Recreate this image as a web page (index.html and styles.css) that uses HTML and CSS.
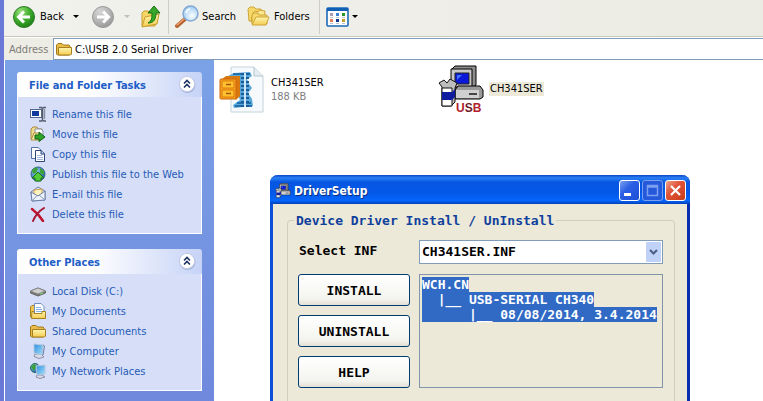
FILE: index.html
```html
<!DOCTYPE html>
<html lang="en">
<head>
  <meta charset="UTF-8" />
  <meta name="viewport" content="width=device-width, initial-scale=1.0"/>
  <title>C:\USB 2.0 Serial Driver</title>
  <link rel="stylesheet" href="styles.css">
</head>
<body>

  <svg class="defs" width="0" height="0" aria-hidden="true">
    <defs>
      <radialGradient id="green" cx="35%" cy="25%" r="80%">
        <stop offset="0" stop-color="#9be07f"/><stop offset="0.5" stop-color="#43b02f"/><stop offset="1" stop-color="#1b7d16"/>
      </radialGradient>
      <radialGradient id="grey" cx="35%" cy="25%" r="80%">
        <stop offset="0" stop-color="#d6d6d6"/><stop offset="0.6" stop-color="#b4b4b4"/><stop offset="1" stop-color="#969696"/>
      </radialGradient>
      <radialGradient id="lens" cx="60%" cy="65%" r="65%">
        <stop offset="0" stop-color="#fbfeff"/><stop offset="1" stop-color="#9fcdf3"/>
      </radialGradient>
      <radialGradient id="globe" cx="35%" cy="30%" r="75%">
        <stop offset="0" stop-color="#9ad0f4"/><stop offset="1" stop-color="#1c5bab"/>
      </radialGradient>
      <linearGradient id="folder" x1="0" y1="0" x2="0" y2="1">
        <stop offset="0" stop-color="#fff6b0"/><stop offset="1" stop-color="#f3cc50"/>
      </linearGradient>
      <linearGradient id="screen" x1="0" y1="0" x2="1" y2="1">
        <stop offset="0" stop-color="#2f8de0"/><stop offset="1" stop-color="#a5e2fb"/>
      </linearGradient>
      <symbol id="chevrons" viewBox="0 0 18 18">
        <circle cx="9.500" cy="10" r="8" fill="#8f9fc9" opacity="0.6"/>
        <circle cx="9" cy="9" r="7.600" fill="#fff" stroke="#c3cbe6"/>
        <path d="M6 8.500 L9 5.500 L12 8.500 M6 12.500 L9 9.500 L12 12.500" fill="none" stroke="#1c3163" stroke-width="1.600"/>
      </symbol>
      <symbol id="smallfolder" viewBox="0 0 16 16">
        <path d="M0.500 13 V4 L2 2.500 H6 L7.500 4 H13 L14 5 V13 L13 14 H1.500 Z" fill="#e9bd45" stroke="#a27a1d"/>
        <path d="M2.500 14 V6.500 H15.500 V13 L14.500 14 Z" fill="url(#folder)" stroke="#a8801f"/>
      </symbol>
      <symbol id="usbpc" viewBox="0 0 46 46">
        <path d="M14 4 L17 1 H38 V20 L34 23 H14 Z" fill="#8d8d8d" stroke="#000"/>
        <path d="M13 4 H34 V22 H13 Z" fill="#c8c8c8" stroke="#000"/>
        <path d="M17 8 H31 V19 H17 Z" fill="#0b18d8" stroke="#222"/>
        <path d="M19 10 H24 L19 15 Z" fill="#3e72ff"/>
        <path d="M17 25 L20 21 H42 L45 25 V32 L42 34 H17 Z" fill="#9a9a9a" stroke="#000"/>
        <path d="M18 25 H41 V33 H18 Z" fill="#d0d0d0"/>
        <path d="M31 29 H39" stroke="#444" stroke-width="2"/>
        <path d="M4 22 L1 18 L6 15 L9 18 L12 14 L19 18 L17 23 L17 37 L13 41 H4 Z" fill="#bdbdbd" stroke="#111"/>
        <path d="M4 23 H14 V41 H4 Z" fill="#fff" stroke="#111"/>
        <path d="M4 27 H14 V35 H4 Z M14 27 L17 24 V32 L14 35 Z" fill="#101c9e"/>
      </symbol>
    </defs>
  </svg>

  <div class="explorer">
    <div class="toolbar">
      <button class="tool back" type="button">
        <svg width="24" height="24" viewBox="0 0 24 24" aria-hidden="true">
          <circle cx="12" cy="12" r="10.500" fill="url(#green)" stroke="#2b7d22"/>
          <path d="M18 12 H7 M12 6.500 L6.500 12 L12 17.500" fill="none" stroke="#fff" stroke-width="3"/>
        </svg>
        <span>Back</span>
      </button>
      <button class="caret" type="button" aria-label="Back history"></button>
      <button class="tool forward" type="button" aria-label="Forward" disabled>
        <svg width="24" height="24" viewBox="0 0 24 24" aria-hidden="true">
          <circle cx="12" cy="12" r="10.500" fill="url(#grey)" stroke="#9a9a9a"/>
          <path d="M6 12 H17 M12 6.500 L17.500 12 L12 17.500" fill="none" stroke="#fff" stroke-width="3"/>
        </svg>
      </button>
      <button class="caret off" type="button" aria-label="Forward history" disabled></button>
      <button class="tool up" type="button" aria-label="Up">
        <svg width="22" height="24" viewBox="0 0 22 24" aria-hidden="true">
          <path d="M2 21 V8 L4 6 H8 L10 8 H15 V21 Z" fill="#f6d768" stroke="#c79c2b"/>
          <path d="M2 22 L5 12 L19 9 L17 19 Z" fill="url(#folder)" stroke="#c79c2b"/>
          <path d="M8 18 C12 16 12 12 12 8 H8 L14 1 L20 8 H16 C16 14 14 18 8 18 Z" fill="#35a72b" stroke="#14700f"/>
        </svg>
      </button>
      <span class="divider"></span>
      <button class="tool search" type="button">
        <svg width="24" height="24" viewBox="0 0 24 24" aria-hidden="true">
          <path d="M2 21 L10 14" stroke="#b3612f" stroke-width="4" stroke-linecap="round"/>
          <path d="M2 20 L9 14" stroke="#eea26c" stroke-width="1.500" stroke-linecap="round"/>
          <circle cx="15.500" cy="8.500" r="7.500" fill="url(#lens)" stroke="#84a8d6" stroke-width="1.500"/>
          <path d="M11 8 A5 5 0 0 1 15 4" fill="none" stroke="#fff" stroke-width="1.500"/>
        </svg>
        <span>Search</span>
      </button>
      <button class="tool folders" type="button">
        <svg width="24" height="24" viewBox="0 0 24 24" aria-hidden="true">
          <path d="M2 16 L1 4 L3 2 H7 L9 4 H14 L15 16 Z" fill="#f5d868" stroke="#cfa43a"/>
          <path d="M4 17 L6 8 L8 6 L11 7 L12 5 L18 6 L17 16 Z" fill="#fbe98f" stroke="#cfa43a"/>
          <path d="M5 19 V10 L7 8 H11 L12 10 H20 V19 Z" fill="#f5d868" stroke="#cfa43a"/>
          <path d="M5 20 L9 12 H22 L19 20 Z" fill="url(#folder)" stroke="#cfa43a"/>
        </svg>
        <span>Folders</span>
      </button>
      <span class="divider"></span>
      <button class="tool views" type="button" aria-label="Views">
        <svg width="24" height="20" viewBox="0 0 24 20" aria-hidden="true">
          <rect x="1" y="1" width="21" height="18" rx="1" fill="#fff" stroke="#1d6ab8" stroke-width="1.600"/>
          <path d="M1 1 H22 V4 H1 Z" fill="#1260b5"/>
          <path d="M4 6 H7 V9 H4 Z" fill="#a99bb5"/><path d="M10 6 H13 V9 H10 Z" fill="#3b82d0"/><path d="M16 6 H19 V9 H16 Z" fill="#2b952c"/>
          <path d="M4 12 H7 V15 H4 Z" fill="#e08157"/><path d="M10 12 H13 V15 H10 Z" fill="#12358e"/><path d="M16 12 H19 V15 H16 Z" fill="#c5a129"/>
          <path d="M4 10.500 H7 M10 10.500 H13 M16 10.500 H19 M4 16.500 H7 M10 16.500 H13 M16 16.500 H19" stroke="#b9c3cf"/>
        </svg>
      </button>
      <button class="caret" type="button" aria-label="Views menu"></button>
    </div>

    <div class="addressbar">
      <label for="address">Address</label>
      <div class="address">
        <svg width="16" height="16" aria-hidden="true"><use href="#smallfolder"/></svg>
        <input type="text" id="address" value="C:\USB 2.0 Serial Driver" />
      </div>
    </div>

    <div class="content">
      <aside class="sidebar">
        <section class="panel">
          <header>
            <h2>File and Folder Tasks</h2>
            <button type="button" aria-label="Collapse File and Folder Tasks"><svg width="18" height="18" aria-hidden="true"><use href="#chevrons"/></svg></button>
          </header>
          <ul>
            <li><a href="#">
              <svg width="16" height="16" viewBox="0 0 16 16" aria-hidden="true">
                <rect x="0.500" y="3.500" width="11" height="8" fill="#fff" stroke="#52668f"/>
                <rect x="2" y="5" width="7" height="5" fill="#103a9d"/>
                <path d="M9 1.500 H11.500 L12.500 2.500 L13.500 1.500 H16 M12.500 2 V14 M9 15 H11.500 L12.500 14 L13.500 15 H16" fill="none" stroke="#555e70" stroke-width="1.500"/>
                <path d="M14.500 3 V13" stroke="#8a92a3" stroke-width="1.500"/>
              </svg>Rename this file</a></li>
            <li><a href="#">
              <svg width="16" height="16" viewBox="0 0 16 16" aria-hidden="true">
                <path d="M1 13 V3 L3 1 H7 L8 3 H12 V13 Z" fill="#f1d98a" stroke="#a88d45"/>
                <path d="M5 3 H11 L13 5 V12 H5 Z" fill="#fff" stroke="#8790a5"/>
                <path d="M1 14 L4 7 H10 V14 Z" fill="#fbe9a5" stroke="#a88d45"/>
                <path d="M5 9 H9 V6 L15 11 L9 15.500 V13 H5 Z" fill="#2ea42a" stroke="#11650f"/>
              </svg>Move this file</a></li>
            <li><a href="#">
              <svg width="16" height="16" viewBox="0 0 16 16" aria-hidden="true">
                <path d="M1.500 1.500 H8 L11 4 V12.500 H1.500 Z" fill="#fff" stroke="#5574a5"/>
                <path d="M5.500 4.500 H11 L14.500 7.500 V15.500 H5.500 Z" fill="#fff" stroke="#2c477b"/>
                <path d="M11 4.500 V8 H14.500" fill="#b8cbeb" stroke="#2c477b"/>
                <path d="M7 9.500 H12 M7 11.500 H13 M7 13.500 H13" stroke="#a3b7d8"/>
              </svg>Copy this file</a></li>
            <li><a href="#">
              <svg width="16" height="16" viewBox="0 0 16 16" aria-hidden="true">
                <circle cx="8" cy="8" r="7" fill="url(#globe)" stroke="#35618c"/>
                <path d="M2 4 L6 1 L8 3 L6 7 L3 8 Z M10 2 L14 5 L14 9 L10 7 Z" fill="#3da238"/>
                <path d="M8 6 L14 12 H11 V15 H5 V12 H2 Z" fill="#52cb37" stroke="#176f14"/>
              </svg>Publish this file to the Web</a></li>
            <li><a href="#">
              <svg width="16" height="16" viewBox="0 0 16 16" aria-hidden="true">
                <path d="M1 6 L8 1 L15 5 V14 L2 15 Z" fill="#dce5f6" stroke="#6d7fa5"/>
                <path d="M4 4 L12 3 V10 H4 Z" fill="#fff3c0" stroke="#d79c45"/>
                <path d="M1 6 L8 10 L15 5 V14 L2 15 Z" fill="#edf3fd" stroke="#6d7fa5"/>
                <path d="M2 15 L7 9.500 M15 14 L9 9" stroke="#8799bb"/>
              </svg>E-mail this file</a></li>
            <li><a href="#">
              <svg width="16" height="16" viewBox="0 0 16 16" aria-hidden="true">
                <path d="M2 3 C6 6 10 10 13 15" fill="none" stroke="#c0152f" stroke-width="2.500" stroke-linecap="round"/>
                <path d="M14 2 C9 5 5 10 3 15" fill="none" stroke="#a81832" stroke-width="2" stroke-linecap="round"/>
              </svg>Delete this file</a></li>
          </ul>
        </section>

        <section class="panel">
          <header>
            <h2>Other Places</h2>
            <button type="button" aria-label="Collapse Other Places"><svg width="18" height="18" aria-hidden="true"><use href="#chevrons"/></svg></button>
          </header>
          <ul>
            <li><a href="#">
              <svg width="16" height="16" viewBox="0 0 16 16" aria-hidden="true">
                <path d="M0.500 8 L8 5 L15.500 8 V10 L8 13 L0.500 10 Z" fill="#777" stroke="#666"/>
                <path d="M0.500 8 L8 5 L15.500 8 L8 11 Z" fill="#cfcfcf" stroke="#8a8a8a"/>
                <path d="M10 11 L13 10" stroke="#7be06e"/>
              </svg>Local Disk (C:)</a></li>
            <li><a href="#">
              <svg width="16" height="16" viewBox="0 0 16 16" aria-hidden="true">
                <path d="M0.500 14 V4 L2 2.500 H5 V14 Z" fill="#f0c850" stroke="#a8801f"/>
                <path d="M4.500 0.500 H11 L14 3.500 V13 H4.500 Z" fill="#fff" stroke="#6c8fc0"/>
                <path d="M6 4.500 H11 M6 6.500 H12 M6 8.500 H12" stroke="#87b3e4"/>
                <path d="M2 8.500 H4 V10.500 H12 V8.500 H15.500 V15.500 H1.500 Z" fill="url(#folder)" stroke="#a8801f"/>
              </svg>My Documents</a></li>
            <li><a href="#"><svg width="16" height="16" aria-hidden="true"><use href="#smallfolder"/></svg>Shared Documents</a></li>
            <li><a href="#">
              <svg width="16" height="16" viewBox="0 0 16 16" aria-hidden="true">
                <path d="M5 11 H11 L14 14 L9 15.500 L4 13.500 Z" fill="#d9dbe8" stroke="#8b90a9"/>
                <path d="M4 1 L13 2 L12 12 L4 10 Z" fill="url(#screen)" stroke="#b5c6dd"/>
                <path d="M13 2 L14.500 3 L13 12" fill="none" stroke="#637ba5"/>
              </svg>My Computer</a></li>
            <li><a href="#">
              <svg width="16" height="16" viewBox="0 0 16 16" aria-hidden="true">
                <circle cx="5" cy="5" r="4.500" fill="url(#globe)" stroke="#286b56"/>
                <path d="M1 4 L4 1 L7 3 L4 8 Z" fill="#35a038"/>
                <path d="M7 12 H12 L15 14 L10 15.500 L6 14 Z" fill="#d9dbe8" stroke="#8b90a9"/>
                <path d="M6 3 L15 2 V11 L7 12 Z" fill="url(#screen)" stroke="#b5c6dd"/>
              </svg>My Network Places</a></li>
          </ul>
        </section>
      </aside>

      <main class="files">
        <div class="file">
          <svg width="48" height="48" viewBox="0 0 48 48" aria-hidden="true">
            <path d="M13 2 H36 L45 11 V47 H13 Z" fill="#f6fafc" stroke="#c6d3da"/>
            <path d="M36 2 V11 H45" fill="#e4edf1" stroke="#b5c6cf"/>
            <path d="M10 11 L16 8 L32 7 L34 11 L29 14 L31 19 L34 23 L30 28 L34 34 L35 41 L16 43 L15 40 L22 35 L20 30 L12 30 Z" fill="#58a8da"/>
            <path d="M17 41 H34 M19 38 H33 M15 9 H32" stroke="#2370ae" stroke-width="2"/>
            <path d="M27 8 V42" stroke="#1d5b98" stroke-width="8" stroke-dasharray="2 2"/>
            <path d="M27 8 V42" stroke="#cde8f6" stroke-width="2"/>
            <path d="M3 15 L8 11 H22 V31 L18 35 Z" fill="#d8780e"/>
            <rect x="2" y="14" width="16" height="20" rx="1" fill="#f7a51e" stroke="#cc650c"/>
            <path d="M4 16 H16 V23 H4 Z M4 25 H16 V32 H4 Z" fill="#ffc02f" stroke="#dc7b0e"/>
            <path d="M8 19.500 H13 M8 28.500 H13" stroke="#a7530a" stroke-width="1.600"/>
          </svg>
          <div class="info">
            <span class="name">CH341SER</span>
            <span class="size">188 KB</span>
          </div>
        </div>
        <div class="file">
          <div class="usbicon">
            <svg width="46" height="46" aria-hidden="true"><use href="#usbpc"/></svg>
            <span><b>U</b><i>S</i><b>B</b></span>
          </div>
          <div class="info">
            <span class="name selected">CH341SER</span>
          </div>
        </div>
      </main>
    </div>

    <!-- setup window on top of the folder -->
    <div class="dialog" role="dialog" aria-labelledby="dialogTitle">
      <div class="titlebar">
        <svg width="16" height="16" viewBox="0 0 46 46" aria-hidden="true"><use href="#usbpc"/></svg>
        <h1 id="dialogTitle">DriverSetup</h1>
        <button class="winbtn" type="button" aria-label="Minimize">
          <svg width="19" height="19" viewBox="0 0 19 19" aria-hidden="true"><path d="M4 13.500 H11" stroke="#fff" stroke-width="3"/></svg>
        </button>
        <button class="winbtn max" type="button" aria-label="Maximize" disabled>
          <svg width="19" height="19" viewBox="0 0 19 19" aria-hidden="true"><path d="M4.500 4.500 H14.500 V14.500 H4.500 Z M4 6 H15" fill="none" stroke="#7d9ff0" stroke-width="1.500"/></svg>
        </button>
        <button class="winbtn close" type="button" aria-label="Close">
          <svg width="19" height="19" viewBox="0 0 19 19" aria-hidden="true"><path d="M5 5 L14 14 M14 5 L5 14" stroke="#fff" stroke-width="2.200"/></svg>
        </button>
      </div>
      <form class="setup">
        <fieldset>
          <legend>Device Driver Install / UnInstall</legend>
          <div class="grid">
            <label for="inf">Select INF</label>
            <div class="combo">
              <select id="inf">
                <option>CH341SER.INF</option>
              </select>
              <svg width="15" height="20" viewBox="0 0 15 20" aria-hidden="true">
                <rect width="15" height="20" rx="1" fill="#c1d2f9"/>
                <path d="M4 8 L7.500 11.500 L11 8" fill="none" stroke="#4d6185" stroke-width="2.200"/>
              </svg>
            </div>
            <div class="actions">
              <button type="button">INSTALL</button>
              <button type="button">UNINSTALL</button>
              <button type="button">HELP</button>
            </div>
            <div class="device">
              <span>WCH.CN</span>
              <span>  |__ USB-SERIAL CH340</span>
              <span>      |__ 08/08/2014, 3.4.2014</span>
            </div>
          </div>
        </fieldset>
      </form>
    </div>
  </div>

</body>
</html>
```
FILE: styles.css
```css
* {
  box-sizing: border-box;
}
body {
  margin: 0;
  font-family: "DejaVu Sans Condensed", "DejaVu Sans", sans-serif;
  font-size: 11px;
  color: #000;
  background: #fff;
}
button {
  font: inherit;
  color: inherit;
  padding: 0;
  border: none;
  background: none;
}
svg {
  display: block;
  flex: none;
}
.defs {
  position: absolute;
}
.explorer {
  position: relative;
  display: flex;
  flex-direction: column;
  height: 100vh;
  overflow: hidden;
  border-left: 4px solid #6a78d8;
}

/* toolbar */
.toolbar {
  display: flex;
  align-items: center;
  height: 37px;
  padding: 0 8px 3px;
  background: linear-gradient(90deg, #f1f1ed, #ecebe3);
  border-bottom: 1px solid #c9c7ba;
}
.tool {
  display: flex;
  align-items: center;
  gap: 4px;
}
.search,
.folders {
  gap: 3px;
}
.folders {
  margin-left: 11px;
}
.caret {
  width: 0;
  height: 0;
  margin-left: 9px;
  border: 3px solid transparent;
  border-top-color: #000;
  border-bottom: none;
}
.caret.off {
  border-top-color: #c0c0bb;
}
.forward {
  margin-left: 12px;
}
.up {
  margin-left: 10px;
}
.divider {
  width: 1px;
  height: 34px;
  margin: 0 6px;
  background: #cfcec5;
}
.folders + .divider {
  margin-left: 9px;
}
.views + .caret {
  margin-left: 2px;
}

/* address bar */
.addressbar {
  display: flex;
  align-items: center;
  height: 23px;
  padding-left: 5px;
  background: #eeede5;
  border-top: 1px solid #fff;
}
.addressbar label {
  width: 44px;
  color: #7d7c77;
}
.address {
  flex: 1;
  display: flex;
  align-items: center;
  gap: 3px;
  height: 22px;
  padding-left: 2px;
  background: #fff;
  border: 1px solid #7f9db9;
  border-right: none;
}
.address input {
  flex: 1;
  padding: 0;
  border: none;
  outline: none;
  font: inherit;
}

/* task pane */
.content {
  flex: 1;
  display: flex;
}
.sidebar {
  width: 210px;
  padding: 12px;
  background: linear-gradient(#7ba2e7, #6f87dc);
  border-left: 1px solid #fff;
}
.panel {
  margin-bottom: 15px;
}
.panel header {
  display: flex;
  align-items: center;
  justify-content: space-between;
  height: 25px;
  padding: 0 6px 2px 12px;
  background: linear-gradient(90deg, #fff 40%, #c6d3f7);
  border-radius: 3px 3px 0 0;
}
.panel h2 {
  margin: 4px 0 0;
  font-size: 11px;
  color: #215dc6;
}
.panel ul {
  margin: 0;
  padding: 7px 12px 9px;
  list-style: none;
  background: #d6dff7;
  border: 1px solid #fff;
  border-top: none;
}
.panel a {
  display: flex;
  align-items: center;
  gap: 6px;
  height: 20px;
  color: #275bb8;
  text-decoration: none;
}

/* files */
.files {
  display: flex;
  padding: 5px 4px;
}
.file {
  display: flex;
  gap: 5px;
  width: 218px;
  height: 48px;
}
.info {
  display: flex;
  flex-direction: column;
  justify-content: center;
  align-items: flex-start;
}
.name {
  line-height: 14px;
}
.size {
  line-height: 13px;
  color: #808080;
}
.selected {
  padding: 0 1px;
  background: #ece9d8;
}
.usbicon {
  position: relative;
  width: 48px;
  padding-left: 2px;
}
.usbicon span {
  position: absolute;
  left: 20px;
  top: 37px;
  font: bold 12px/12px "Liberation Sans", sans-serif;
}
.usbicon b {
  color: #b3202c;
}
.usbicon i {
  font-style: normal;
  color: #6d1c28;
}

/* setup window */
.dialog {
  position: absolute;
  left: 266px;
  top: 175px;
  bottom: 0;
  width: 420px;
  display: flex;
  flex-direction: column;
  background: #ece9d8;
  border: 3px solid #0d4fd6;
  border-top: none;
  border-bottom: none;
  border-right-color: #0a2fae;
  border-radius: 8px 8px 0 0;
}
.titlebar {
  display: flex;
  align-items: center;
  gap: 2px;
  height: 29px;
  margin: 0 -3px;
  padding: 2px 4px 0 5px;
  background: linear-gradient(#0a46c4, #2b80f5 10%, #0556e2 25%, #0458e8 60%, #0566fb 88%, #0240b8);
  border-radius: 8px 8px 0 0;
}
.titlebar h1 {
  flex: 1;
  margin: 0 0 0 1px;
  font-size: 12px;
  color: #fff;
  text-shadow: 1px 1px #0a2f80;
}
.winbtn {
  width: 21px;
  height: 21px;
  border: 1px solid #fff;
  border-radius: 3px;
  background: linear-gradient(135deg, #7ba0f2, #2a5fe4 40%, #1c4fd8);
}
.winbtn.max {
  border-color: #7d9ff0;
  background: #2459dc;
}
.winbtn.close {
  background: linear-gradient(135deg, #f0a38c, #e0553a 40%, #c83c17);
}
.setup {
  flex: 1;
  display: flex;
  padding: 9px 12px 0 14px;
  font: bold 13px/15px "DejaVu Sans Mono", monospace;
}
fieldset {
  flex: 1;
  min-width: 0;
  margin: 0;
  padding: 12px 11px 0 10px;
  border: 1px solid #d0d0bf;
  border-bottom: none;
  border-radius: 4px 4px 0 0;
}
legend {
  margin-left: -4px;
  padding: 0 2px;
  color: #0f3f9c;
}
.grid {
  display: grid;
  grid-template-columns: 112px 1fr;
  gap: 10px 9px;
}
.grid label {
  padding: 3px 0 0 1px;
}
.combo {
  position: relative;
}
.combo select {
  display: block;
  width: 100%;
  height: 24px;
  padding: 0 2px 2px;
  appearance: none;
  font: inherit;
  color: #000;
  background: #fff;
  border: 1px solid #7f9db9;
  border-radius: 0;
}
.combo svg {
  position: absolute;
  right: 2px;
  top: 2px;
  pointer-events: none;
}
.actions {
  display: flex;
  flex-direction: column;
  gap: 9px;
}
.actions button {
  height: 32px;
  background: linear-gradient(#fff, #f4f4ef 80%, #e3e0d4);
  border: 1px solid #003c74;
  border-radius: 3px;
}
.device {
  padding: 2px;
  overflow: hidden;
  color: #fff;
  border: 1px solid #8295a8;
}
.device span {
  display: block;
  width: fit-content;
  white-space: pre;
  background: #316ac5;
}
```
